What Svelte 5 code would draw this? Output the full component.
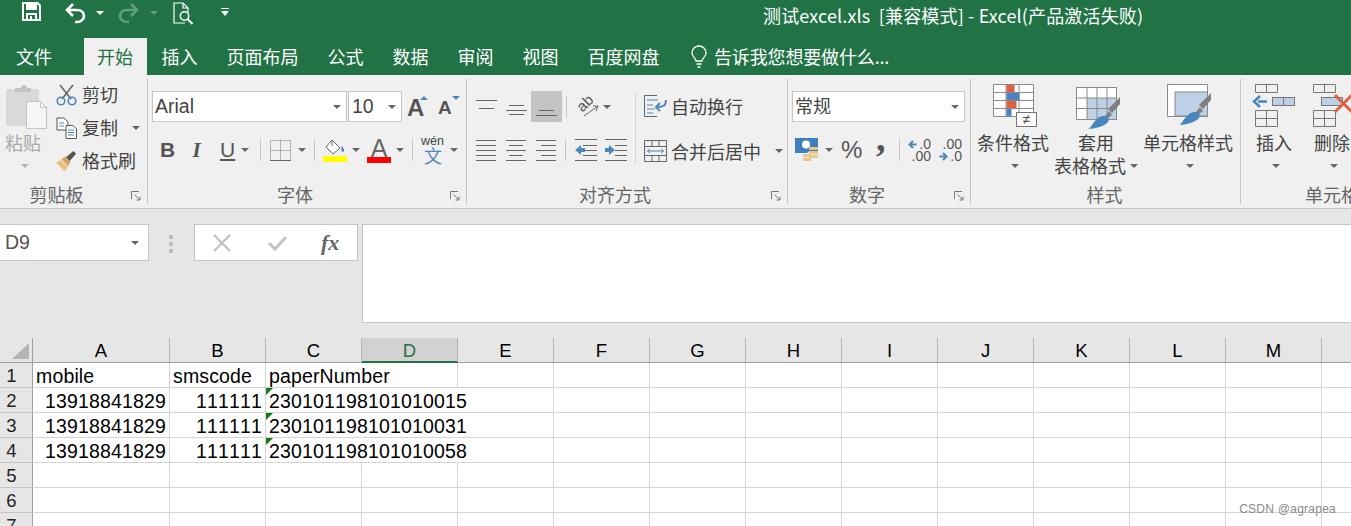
<script>
  const tabs = ['插入', '页面布局', '公式', '数据', '审阅', '视图', '百度网盘'];
  const cols = ['A','B','C','D','E','F','G','H','I','J','K','L','M','N'];
  const rows = [
    { n: 1, a: 'mobile', b: 'smscode', c: 'paperNumber', head: true },
    { n: 2, a: '13918841829', b: '111111', c: '230101198101010015', num: true },
    { n: 3, a: '13918841829', b: '111111', c: '230101198101010031', num: true },
    { n: 4, a: '13918841829', b: '111111', c: '230101198101010058', num: true },
    { n: 5 }, { n: 6 }, { n: 7 }
  ];
  const rest = cols.slice(4);
</script>

{#snippet launcher()}
  <svg class="launcher" width="10" height="10" viewBox="0 0 10 10"><path d="M.5 8V.5H8M3.5 3.5L9 9M5.5 9H9V5.5" fill="none" stroke="#777"/></svg>
{/snippet}

{#snippet alignLines(w, ys, xs)}
  <svg width={w} height="22" viewBox="0 0 {w} 22">
    {#each ys as y, i}
      <path d={`M${xs[i % xs.length][0]} ${y + .5}H${xs[i % xs.length][1]}`} stroke="#666" />
    {/each}
  </svg>
{/snippet}

<div class="app">
  <header class="titlebar">
    <div class="qat">
      <svg class="m22" width="19" height="19" viewBox="0 0 19 19"><path fill="#fff" fill-rule="evenodd" d="M0 0h16l3 3v16H0zM2 2v15h2v-6h11v6h2V4l-2-2v6H4V2zM6 13v4h2v-3h2v3h3v-4z"/></svg>
      <svg class="m23" width="22" height="22" viewBox="0 0 22 22" fill="none" stroke="#fff" stroke-width="2.6"><path d="M9 2L3 8l6 6M3 8h10c5 0 7 3 7 6s-3 6-7 6h-2"/></svg>
      <span class="caret white m10"></span>
      <svg class="m14 dim" width="22" height="22" viewBox="0 0 22 22" fill="none" stroke="#fff" stroke-width="2.6"><path d="M13 2l6 6-6 6M19 8H9c-5 0-7 3-7 6s3 6 7 6h2"/></svg>
      <span class="caret white m10 dim"></span>
      <svg class="m15" width="22" height="23" viewBox="0 0 22 23" fill="none" stroke="#fff" stroke-width="1.2"><path d="M12 21H1V1h9l5 5v5M10 1v5h5"/><circle cx="11.5" cy="14" r="4.2" stroke-width="1.5"/><path d="M14.5 17l5 5" stroke-width="2"/></svg>
      <svg class="m25 menu" width="10" height="9" viewBox="0 0 10 9"><path d="M1 .5h8" stroke="#fff"/><path d="M1 3h8L5 8z" fill="#fff"/></svg>
    </div>
    <div class="title">测试excel.xls&nbsp; [兼容模式] - Excel(产品激活失败)</div>
  </header>

  <nav class="tabs">
    <div class="tab file">文件</div>
    <div class="tab active">开始</div>
    {#each tabs as t}<div class="tab">{t}</div>{/each}
    <svg class="bulb" width="16" height="22" viewBox="0 0 16 22" fill="none" stroke="#fff" stroke-width="1.3"><path d="M5 15c0-3-4-4-4-8a7 7 0 0 1 14 0c0 4-4 5-4 8zM5.500 18h5M6.500 21h3"/></svg>
    <div class="tell">告诉我您想要做什么...</div>
  </nav>

  <section class="ribbon">
    <div class="group g-clip">
      <div class="body">
        <div class="paste">
          <svg width="42" height="45" viewBox="0 0 42 45"><rect y="5" width="33" height="37" rx="2" fill="#dad8da"/><path d="M9 8V4h6a3 3 0 0 1 6 0h4v4z" fill="#c4c2c4"/><path d="M20.500 17.500h14l6 6v21h-20z" fill="#f6f4f6" stroke="#c4c2c4"/><path d="M34.500 17.500v6h6" fill="none" stroke="#c4c2c4"/></svg>
          <div class="paste-text">粘贴</div>
          <span class="caret light"></span>
        </div>
        <div class="small">
          <div class="small-row">
            <svg width="21" height="22" viewBox="0 0 21 22" fill="none"><path d="M4 1l11 14M17 1L6 15" stroke="#666" stroke-width="1.600"/><circle cx="5" cy="17" r="3.800" stroke="#4f86bd" stroke-width="1.600"/><circle cx="16" cy="17" r="3.800" stroke="#4f86bd" stroke-width="1.600"/></svg>
            <span>剪切</span>
          </div>
          <div class="small-row">
            <svg width="21" height="22" viewBox="0 0 21 22" fill="none"><path d="M10 13H1V1h7l4 4v3" stroke="#555" fill="#fff"/><path d="M10 8.500h7l3.500 3.500v9.500H10z" stroke="#555" fill="#fff"/><path d="M3 6h5M3 9h5M12 13h6M12 15.500h6M12 18h6" stroke="#4f86bd"/></svg>
            <span>复制</span>
            <span class="caret m7"></span>
          </div>
          <div class="small-row">
            <svg width="21" height="22" viewBox="0 0 23 22"><path d="M0 13l5-3 8 8-4 4z" fill="#ebc080"/><path d="M6 9l4-3 6 6-3 5z" fill="#d9a55e"/><path d="M11 7l8-7 3 3-7 8z" fill="#555"/></svg>
            <span>格式刷</span>
          </div>
        </div>
      </div>
      <div class="label">剪贴板</div>
      {@render launcher()}
    </div>

    <div class="group g-font">
      <div class="row r1">
        <div class="combo font-name m4"><span>Arial</span><span class="caret"></span></div>
        <div class="combo font-size m1"><span>10</span><span class="caret"></span></div>
        <div class="grow big m5"><span>A</span><i class="tri up"></i></div>
        <div class="grow shrink m9"><span>A</span><i class="tri down"></i></div>
      </div>
      <div class="row r2">
        <span class="fmt bold m12">B</span>
        <span class="fmt ital m16">I</span>
        <span class="fmt under m17">U</span>
        <span class="caret m7"></span>
        <i class="sep m11"></i>
        <svg class="m9" width="21" height="21" viewBox="0 0 21 21" fill="none"><path d="M.5.500h20v20H.5zM10.500.500v20M.5 10.500h20" stroke="#777" stroke-dasharray="1 1"/><path d="M0 20.500h21" stroke="#666"/></svg>
        <span class="caret m7"></span>
        <i class="sep m8"></i>
        <svg class="m8" width="24" height="24" viewBox="0 0 24 24"><path d="M9 2l8 8-7 6-7-7z" fill="#fff" stroke="#666"/><path d="M9 2v6" stroke="#666"/><path d="M19 8c2 3 3 5 1 6-2 0-2-3-1-6z" fill="#4f86bd"/><rect y="18" width="24" height="6" fill="#ffff00"/></svg>
        <span class="caret m5"></span>
        <div class="color m7"><span>A</span><i></i></div>
        <span class="caret m5"></span>
        <i class="sep m8"></i>
        <div class="wen m9"><span>wén</span><b>文</b></div>
        <span class="caret m6"></span>
      </div>
      <div class="label">字体</div>
      {@render launcher()}
    </div>

    <div class="group g-align">
      <div class="body">
        <div class="align-left">
          <div class="row r1">
            <span class="m9 al">{@render alignLines(21, [4, 12], [[0,21],[3,18]])}</span>
            <span class="m9 al">{@render alignLines(21, [9, 14, 18], [[3,18],[0,21],[3,18]])}</span>
            <span class="m4 al-on">{@render alignLines(21, [15, 20], [[3,18],[0,21]])}</span>
            <i class="sep m4"></i>
            <svg class="m11" width="21" height="21" viewBox="0 0 21 21"><text x="1" y="12" transform="rotate(-45 6 11) translate(0 2)" class="ab">ab</text><path d="M6 20L20 10M20 10h-5M20 10l-2 5" stroke="#666" fill="none"/></svg>
            <span class="caret m4"></span>
          </div>
          <div class="row r2">
            <span class="m9 al">{@render alignLines(21, [1, 6, 11, 16, 21], [[0,20]])}</span>
            <span class="m9 al">{@render alignLines(21, [1, 6, 11, 16, 21], [[0,20],[3,17]])}</span>
            <span class="m9 al">{@render alignLines(21, [1, 6, 11, 16, 21], [[0,20],[5,20]])}</span>
            <i class="sep m8"></i>
            <svg class="m9" width="22" height="22" viewBox="0 0 22 22"><path d="M0 .5h22M8 6.500h14M8 11.500h14M8 16.500h14M0 21.500h22" stroke="#666"/><path d="M0 11l6-5v3h4v4H6v3z" fill="#4f86bd"/></svg>
            <svg class="m8" width="22" height="22" viewBox="0 0 22 22"><path d="M0 .5h22M10 6.500h12M10 11.500h12M10 16.500h12M0 21.500h22" stroke="#666"/><path d="M10 11L4 6v3H0v4h4v3z" fill="#4f86bd"/></svg>
          </div>
        </div>
        <i class="sep-tall"></i>
        <div class="align-right">
          <div class="wide-row">
            <svg width="23" height="22" viewBox="0 0 23 22" fill="none"><path d="M13 .5H.5v21H13" stroke="#666"/><path d="M3 5h11M3 10h6M3 14h8M3 18h6" stroke="#4f86bd"/><path d="M22 5c0 6-3 7-9 7M16 8l-4 4 4 4" stroke="#4f86bd" stroke-width="2"/></svg>
            <span>自动换行</span>
          </div>
          <div class="wide-row second">
            <svg width="23" height="22" viewBox="0 0 23 22" fill="none"><path d="M.5.500h22v21H.5zM.5 6.500h22M.5 15.500h22M8 .5v6M15 .5v6M8 15.500v6M15 15.500v6" stroke="#666"/><path d="M3.500 11h16M6 9l-2.500 2L6 13M17 9l2.500 2-2.500 2" stroke="#4f86bd"/></svg>
            <span>合并后居中</span>
            <span class="caret m10"></span>
          </div>
        </div>
      </div>
      <div class="label">对齐方式</div>
      {@render launcher()}
    </div>

    <div class="group g-num">
      <div class="row r1">
        <div class="combo num-format m4"><span>常规</span><span class="caret"></span></div>
      </div>
      <div class="row r2">
        <svg class="m7" width="24" height="24" viewBox="0 0 24 24"><path d="M0 0h23v13h-7a6 6 0 0 0-4 2H0z" fill="#3f7fbf"/><ellipse cx="11" cy="6.500" rx="4" ry="4" fill="#fff"/><g fill="#ecc483"><rect x="14" y="9" width="9" height="3" rx="1"/><rect x="14" y="13" width="9" height="3" rx="1"/><rect x="14" y="17" width="9" height="3" rx="1"/><rect x="8" y="16" width="8" height="3" rx="1"/><rect x="8" y="20" width="8" height="3" rx="1"/></g></svg>
        <span class="caret m6"></span>
        <span class="pct m8">%</span>
        <span class="comma m15">,</span>
        <i class="sep m14"></i>
        <div class="dec m8">
          <span><svg width="9" height="9" viewBox="0 0 9 9"><path d="M8.500 4.500H2M5 1L1.500 4.500 5 8" fill="none" stroke="#4f86bd" stroke-width="2"/></svg>.0</span>
          <span>.00</span>
        </div>
        <div class="dec m8">
          <span>.00</span>
          <span><svg width="9" height="9" viewBox="0 0 9 9"><path d="M.5 4.500H7M4 1l3.500 3.500L4 8" fill="none" stroke="#4f86bd" stroke-width="2"/></svg>.0</span>
        </div>
      </div>
      <div class="label">数字</div>
      {@render launcher()}
    </div>

    <div class="group g-style">
      <div class="body">
        <div class="big-btn b1">
          <svg width="44" height="44" viewBox="0 0 44 44"><path d="M.5.500h40v32H.5zM13 .5v32M.5 8.500h40M.5 16.500h40M.5 24.500h40M26 .5v32" fill="#fff" stroke="#8a8a8a"/><rect x="13.500" y="1" width="8" height="7" fill="#dc6141"/><rect x="13.500" y="9" width="13" height="7" fill="#4a84bf"/><rect x="13.500" y="17" width="10" height="7" fill="#dc6141"/><rect x="13.500" y="25" width="5" height="7" fill="#4a84bf"/><rect x="23.500" y="28.500" width="20" height="14" fill="#fff" stroke="#777"/><text x="33.500" y="40" class="neq">≠</text></svg>
          <div class="txt">条件格式</div>
          <div class="txt"><span class="caret"></span></div>
        </div>
        <div class="big-btn b2">
          <svg width="45" height="44" viewBox="0 0 45 44"><path d="M.5.500h40v32H.5z" fill="#fff" stroke="#8a8a8a"/><rect x="11" y="11" width="30" height="21" fill="#bdd0e6"/><path d="M.5.500h40v32H.5zM11 .5v32M21 .5v32M31 .5v32M.5 11h40M.5 21.500h40" fill="none" stroke="#8a8a8a"/><path d="M44 10v7L36 26l-4-4z" fill="#7f7f7f"/><path d="M33 24l-4 5 2 3 5-4z" fill="#7f7f7f"/><path d="M29 29c3 0 5 3 3 6-3 4-13 7-20 7 4-2 4-6 9-10 3-3 5-3 8-3z" fill="#4a84bf"/></svg>
          <div class="txt">套用</div>
          <div class="txt">表格格式<span class="caret m4"></span></div>
        </div>
        <div class="big-btn b3">
          <svg width="45" height="44" viewBox="0 0 45 44"><path d="M.5.500h40v32H.5z" fill="#fff" stroke="#8a8a8a"/><rect x="8" y="8" width="32.500" height="24" fill="#bdd0e6" stroke="#8a8a8a"/><path d="M44 9v7l-8 9-4-4z" fill="#7f7f7f"/><path d="M33 23l-4 5 2 3 5-4z" fill="#7f7f7f"/><path d="M29 28c3 0 5 3 3 6-3 4-13 7-20 7 4-2 4-6 9-10 3-3 5-3 8-3z" fill="#4a84bf"/></svg>
          <div class="txt">单元格样式</div>
          <div class="txt"><span class="caret"></span></div>
        </div>
      </div>
      <div class="label">样式</div>
    </div>

    <div class="group g-cell">
      <div class="body">
        <div class="big-btn c1">
          <svg width="44" height="44" viewBox="0 0 44 44" fill="none"><path d="M3.500.500h22v8h-22zM14.500.500v8M3.500 26.500h22v16h-22zM14.500 26.500v16M3.500 34.500h22" stroke="#777"/><rect x="20.500" y="13.500" width="22" height="8" fill="#bdd0e6" stroke="#777"/><path d="M31.500 13.500v8" stroke="#777"/><path d="M15 17.500H6M8 12l-6 5.500 6 5.500" stroke="#4a84bf" stroke-width="2.500"/></svg>
          <div class="txt">插入</div>
          <div class="txt"><span class="caret"></span></div>
        </div>
        <div class="big-btn c2">
          <svg width="44" height="44" viewBox="0 0 44 44" fill="none"><path d="M.5.500h22v8H.5zM11.500.5v8M.5 26.500h22v16H.5zM11.500 26.500v16M.5 34.500h22" stroke="#777"/><rect x="8.500" y="13.500" width="21" height="8" fill="#bdd0e6" stroke="#777"/><path d="M22 11l17 17M39 11L22 28" stroke="#dc6141" stroke-width="3"/></svg>
          <div class="txt">删除</div>
          <div class="txt"><span class="caret"></span></div>
        </div>
      </div>
      <div class="label">单元格</div>
    </div>
  </section>

  <section class="formula">
    <div class="namebox"><span>D9</span><span class="caret"></span></div>
    <div class="dots"><i></i><i></i><i></i></div>
    <div class="fx-btns">
      <svg width="18" height="18" viewBox="0 0 18 18"><path d="M1 1l16 16M17 1L1 17" stroke="#c4c4c4" stroke-width="2.400"/></svg>
      <svg width="19" height="16" viewBox="0 0 19 16"><path d="M1 8l6 6L18 2" fill="none" stroke="#c4c4c4" stroke-width="3"/></svg>
      <span class="fx">fx</span>
    </div>
    <div class="input"></div>
  </section>

  <section class="sheet">
    <div class="corner"><i></i></div>
    {#each cols as c}
      <div class="colhead" class:sel={c === 'D'}>{c}</div>
    {/each}
    {#each rows as r}
      <div class="rowhead">{r.n}</div>
      <div class="cell" class:right={r.num}>{r.a ?? ''}</div>
      <div class="cell" class:right={r.num}>{r.b ?? ''}</div>
      <div class="cell" class:over={r.c}>{r.c ?? ''}{#if r.num}<i class="flag"></i>{/if}</div>
      <div class="cell" class:over={r.num}></div>
      {#each rest as c}<div class="cell"></div>{/each}
    {/each}
  </section>
  <div class="mark">CSDN @agrapea</div>
</div>

<style>
  :global(body) { margin: 0; background: #fff; overflow: hidden; }
  .app {
    width: 1351px; height: 526px; overflow: hidden; position: relative;
    font-family: "Noto Sans CJK SC", "Liberation Sans", sans-serif; color: #444;
  }
  svg { display: block; flex: none; overflow: visible; }
  .m1 { margin-left: 1px; } .m4 { margin-left: 4px; } .m5 { margin-left: 5px; } .m6 { margin-left: 6px; }
  .m7 { margin-left: 7px; } .m8 { margin-left: 8px; } .m9 { margin-left: 9px; } .m10 { margin-left: 10px; }
  .m11 { margin-left: 11px; } .m12 { margin-left: 12px; } .m14 { margin-left: 14px; } .m15 { margin-left: 15px; }
  .m16 { margin-left: 16px; } .m17 { margin-left: 17px; } .m22 { margin-left: 22px; } .m23 { margin-left: 23px; } .m25 { margin-left: 25px; }
  .dim { opacity: .3; }

  .caret {
    display: inline-block; flex: none; width: 0; height: 0; vertical-align: middle;
    border-left: 4px solid transparent; border-right: 4px solid transparent; border-top: 4px solid #666;
  }
  .caret.white { border-top-color: #fff; }
  .caret.light { border-top-color: #b4b4b4; }

  .titlebar { height: 38px; background: #217346; display: flex; color: #fff; }
  .qat { width: 763px; display: flex; align-items: flex-start; padding-top: 2px; box-sizing: border-box; flex: none; }
  .qat .caret { margin-top: 9px; }
  .qat .menu { margin-top: 6px; }
  .title { font-size: 18px; line-height: 30px; white-space: nowrap; letter-spacing: .15px; }

  .tabs { height: 37px; background: #217346; display: flex; align-items: stretch; color: #fff; font-size: 18px; }
  .tab { padding: 0 14.5px; line-height: 37px; white-space: nowrap; }
  .tab.file { padding: 0 16px; margin-right: 16px; }
  .tab.active { background: #f0f0f0; color: #217346; padding: 0 13.5px 0 13px; margin-right: .5px; }
  .bulb { margin: 8px 0 0 17px; }
  .tell { margin-left: 7px; line-height: 37px; font-size: 18px; letter-spacing: -.15px; white-space: nowrap; }

  .ribbon {
    height: 134px; box-sizing: border-box; background: #f0f0f0; border-bottom: 1px solid #c6c6c6;
    display: flex; padding-top: 4px; font-size: 18px;
  }
  .group {
    height: 125px; box-sizing: border-box; border-right: 1px solid #c6c6c6; position: relative; flex: none;
    display: flex; flex-direction: column;
  }
  .g-clip { width: 148px; } .g-font { width: 319px; } .g-align { width: 321px; }
  .g-num { width: 183px; } .g-style { width: 270px; } .g-cell { width: 182px; border-right: 0; }
  .body { display: flex; flex: 1; min-height: 0; }
  .label { height: 22px; line-height: 22px; margin-top: auto; margin-bottom: -1px; text-align: center; color: #666; font-size: 18px; flex: none; }
  .g-font .label, .g-align .label, .g-num .label { padding-right: 24px; }
  .g-clip .label { padding-right: 34px; }
  .g-style .label { padding-right: 2px; }
  .launcher { position: absolute; right: 6px; bottom: 3px; }

  .paste { width: 52px; padding: 5px 0 0 6px; box-sizing: border-box; display: flex; flex-direction: column; align-items: flex-start; }
  .paste-text { color: #aaa; line-height: 24px; margin: 1px 0 0 -1px; }
  .paste .caret { margin: 10px 0 0 15px; }
  .small { margin-left: 4px; margin-top: -1px; }
  .small-row { height: 33px; display: flex; align-items: center; gap: 5px; }
  .small-row span:not(.caret) { position: relative; top: -1px; }
  .small-row .caret { margin-left: 9px; }

  .row { display: flex; align-items: center; }
  .r1 { height: 31px; margin-top: 12px; }
  .r2 { height: 30px; margin-top: 13px; }
  .combo {
    height: 31px; box-sizing: border-box; background: #fff; border: 1px solid #c6c6c6; display: flex; align-items: center;
    justify-content: space-between; padding: 0 5px 0 2px; flex: none; font-size: 19.500px; font-family: "Liberation Sans", "Noto Sans CJK SC", sans-serif;
  }
  .num-format { font-size: 18px; line-height: 26px; width: 173px; }
  .font-name { width: 195px; } .font-size { width: 54px; }
  .font-size { padding-left: 3px; }
  .grow { position: relative; width: 22px; height: 31px; font-family: "Liberation Sans", sans-serif; font-weight: 700; color: #555; flex: none; }
  .grow span { position: absolute; left: 0; bottom: -1px; line-height: 31px; }
  .big span { font-size: 24px; }
  .shrink span { font-size: 19px; }
  .tri { position: absolute; width: 0; height: 0; border-left: 4px solid transparent; border-right: 4px solid transparent; }
  .tri.up { border-bottom: 4px solid #4f86bd; top: 5px; right: 1px; }
  .tri.down { border-top: 4px solid #4f86bd; top: 5px; right: 0; }
  .fmt { flex: none; width: 14px; text-align: center; font-size: 21px; line-height: 28px; color: #555; font-family: "Liberation Sans", sans-serif; }
  .bold { font-weight: 700; }
  .ital { width: 13px; font-style: italic; font-family: "Liberation Serif", serif; font-weight: 700; }
  .under { text-decoration: underline; text-underline-offset: 2px; }
  .sep { width: 1px; height: 22px; background: #c6c6c6; flex: none; display: block; }
  .color { position: relative; width: 24px; height: 26px; flex: none; text-align: center; font: 25px/22px "Liberation Sans", sans-serif; color: #666; }
  .color i { position: absolute; left: 0; bottom: 0; width: 24px; height: 6px; background: #ff0000; }
  .wen { width: 22px; flex: none; text-align: center; line-height: 13px; }
  .wen span { display: block; font: 400 12.500px/11px "Liberation Sans", sans-serif; color: #444; margin-left: -1px; }
  .wen b { display: block; font-weight: 400; font-size: 18px; line-height: 17px; color: #4f86bd; }

  .align-left { width: 168px; }
  .al { display: block; flex: none; }
  .al-on { display: block; flex: none; background: #c4c4c4; padding: 4px 5px 5px; height: 31px; box-sizing: border-box; }
  .ab { font: 15px "Liberation Sans", sans-serif; fill: #555; }
  .sep-tall { width: 1px; height: 73px; margin-top: 13px; background: #d6d6d6; flex: none; }
  .align-right { margin-left: 8px; padding-top: 16px; }
  .wide-row { display: flex; align-items: center; gap: 4px; height: 22px; }
  .wide-row span { white-space: nowrap; }
  .wide-row.second { margin-top: 23px; }

  .pct { font: 24px/30px "Liberation Sans", sans-serif; color: #555; width: 20px; text-align: center; flex: none; }
  .comma { font: 700 38px/20px "Liberation Serif", serif; color: #555; width: 9px; margin-top: -24px; flex: none; }
  .dec { width: 23px; flex: none; font: 14px/12px "Liberation Sans", sans-serif; color: #555; white-space: nowrap; display: flex; flex-direction: column; align-items: flex-end; }
  .dec span { display: flex; align-items: center; gap: 2px; }
  .neq { font: 14px "Liberation Sans", sans-serif; text-anchor: middle; fill: #444; }

  .big-btn { display: flex; flex-direction: column; align-items: center; padding-top: 5px; box-sizing: border-box; flex: none; }
  .big-btn svg { align-self: center; position: relative; }
  .txt { line-height: 23px; white-space: nowrap; display: flex; align-items: center; justify-content: center; height: 23px; }
  .txt > .caret:only-child { margin-left: 4px; }
  .b1 { width: 84px; } .b1 svg { left: 2px; }
  .b2 { width: 82px; padding-top: 8px; } .b2 svg { margin-bottom: -3px; left: 2px; }
  .b3 { width: 102px; } .b3 svg { left: 1.500px; }
  .big-btn svg + .txt { margin-top: 3px; }
  .c1 { width: 66px; } .c2 { width: 50px; } .c2 svg { left: 3px; }

  .formula {
    height: 129px; background: #e6e6e6; display: flex; align-items: flex-start; padding-top: 15px; box-sizing: border-box;
  }
  .namebox {
    width: 150px; height: 37px; margin-left: -1px; box-sizing: border-box; background: #fff; border: 1px solid #c6c6c6; flex: none;
    display: flex; align-items: center; justify-content: space-between; padding: 0 9px 0 5px; font: 19.500px "Liberation Sans", sans-serif; color: #555;
  }
  .dots { margin: 11px 0 0 20px; width: 4px; display: grid; gap: 3px; flex: none; }
  .dots i { display: block; width: 4px; height: 4px; background: #bcbcbc; }
  .fx-btns {
    width: 164px; height: 37px; margin-left: 21px; box-sizing: border-box; background: #fff; border: 1px solid #c6c6c6; flex: none;
    display: flex; align-items: center; padding-left: 18px;
  }
  .fx-btns svg:nth-child(2) { margin-left: 37px; }
  .fx { margin-left: 34px; font: italic 700 22px/30px "Liberation Serif", serif; color: #666; }
  .input { flex: 1; height: 99px; margin-left: 4px; background: #fff; border: 1px solid #c6c6c6; box-sizing: border-box; margin-right: -2px; }

  .sheet {
    display: grid; grid-template-columns: 33px 137px repeat(13, 96px); grid-auto-rows: 25px;
    font: 19.500px "Liberation Sans", sans-serif; font-kerning: none; color: #000; position: relative;
  }
  .corner { background: #e6e6e6; border-right: 1px solid #9f9f9f; border-bottom: 1px solid #9f9f9f; box-sizing: border-box; }
  .corner i { display: block; width: 17px; height: 16px; margin: 5px 0 0 12px; background: #b5b5b5; clip-path: polygon(100% 0, 100% 100%, 0 100%); }
  .colhead {
    background: #e6e6e6; border-right: 1px solid #b5b5b5; border-bottom: 1px solid #9f9f9f; box-sizing: border-box;
    text-align: center; line-height: 24px; padding-top: 1px; font-size: 18.500px;
  }
  .colhead.sel { background: #d2d2d2; color: #217346; border-bottom: 2px solid #217346; }
  .rowhead {
    background: #e6e6e6; border-right: 1px solid #9f9f9f; border-bottom: 1px solid #c6c6c6; box-sizing: border-box;
    padding: 1px 9px 0 0; text-align: center; line-height: 24px; font-size: 18.500px; color: #222;
  }
  .cell {
    border-right: 1px solid #d4d4d4; border-bottom: 1px solid #d4d4d4; box-sizing: border-box; padding: 1px 3px 0;
    white-space: nowrap; line-height: 24px; position: relative; letter-spacing: .15px;
  }
  .cell.right { text-align: right; }
  .cell.over { border-right-color: transparent; }
  .flag { position: absolute; left: 0; top: 0; width: 7px; height: 7px; background: #107c10; clip-path: polygon(0 0, 100% 0, 0 100%); }
  .mark { position: absolute; right: 15px; bottom: 10px; font: 12px/14px "Liberation Sans", sans-serif; color: #8a8a8a; letter-spacing: .25px; }
</style>
